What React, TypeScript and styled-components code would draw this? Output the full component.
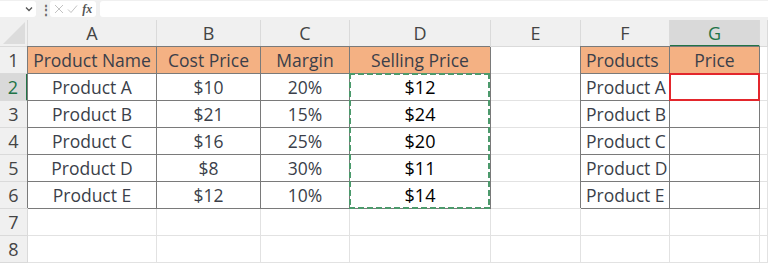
import React from 'react';
import styled, { createGlobalStyle } from 'styled-components';

const GlobalStyle = createGlobalStyle`
  html, body {
    margin: 0;
    padding: 0;
    background: #ffffff;
  }
  body {
    font-family: "Open Sans", "Noto Sans", sans-serif;
  }
`;

const Page = styled.div`
  width: 768px;
  height: 264px;
  overflow: hidden;
  background: #ffffff;
`;

const FormulaBar = styled.div`
  height: 20px;
  background: #f0f0f0;
  display: flex;
  align-items: center;
  gap: 4px;
  padding: 0 0 2px 0;
  box-sizing: border-box;
`;

const NameBox = styled.div`
  width: 36px;
  height: 16px;
  background: #ffffff;
  border-radius: 0 3px 3px 0;
  display: flex;
  align-items: center;
  justify-content: flex-end;
  padding-right: 3px;
  box-sizing: border-box;
`;

const Dots = styled.div`
  width: 6px;
  color: #666;
  font-size: 12px;
  font-weight: 700;
  text-align: center;
`;

const FnBox = styled.div`
  width: 46px;
  height: 16px;
  background: #ffffff;
  border-radius: 3px;
  display: flex;
  align-items: center;
  justify-content: space-around;
  padding: 0 2px;
  box-sizing: border-box;
`;

const Fx = styled.span`
  font-family: "Liberation Serif", serif;
  font-style: italic;
  font-weight: 700;
  color: #555;
  font-size: 12px;
  line-height: 1;
`;

const Input = styled.div`
  flex: 1;
  height: 16px;
  background: #ffffff;
  border-radius: 3px 0 0 3px;
`;

const Sheet = styled.div`
  display: grid;
  grid-template-columns: 28px 129px 104px 89px 141px 90px 89px 90px 1fr;
  grid-auto-rows: 27px;
`;

const Corner = styled.div`
  background: #f0f0f0;
  border-right: 1px solid #dadada;
  border-bottom: 1px solid #dadada;
  position: relative;
  &::after {
    content: '';
    position: absolute;
    right: 2px;
    bottom: 2px;
    width: 22px;
    height: 22px;
    background: #dcdcdc;
    clip-path: polygon(100% 0, 100% 100%, 0 100%);
  }
`;

const ColHead = styled.div<{ $sel?: boolean }>`
  background: ${p => (p.$sel ? '#d9d9d9' : '#f0f0f0')};
  color: ${p => (p.$sel ? '#217346' : '#444444')};
  border-right: 1px solid #dadada;
  border-bottom: ${p => (p.$sel ? '2px solid #217346' : '1px solid #dadada')};
  display: flex;
  align-items: center;
  justify-content: center;
  font-size: 18px;
  box-sizing: border-box;
`;

const RowHead = styled.div<{ $sel?: boolean }>`
  background: ${p => (p.$sel ? '#d9d9d9' : '#f0f0f0')};
  color: ${p => (p.$sel ? '#217346' : '#444444')};
  border-right: ${p => (p.$sel ? '2px solid #217346' : '1px solid #dadada')};
  border-bottom: 1px solid #dadada;
  display: flex;
  align-items: center;
  justify-content: center;
  font-size: 18px;
  box-sizing: border-box;
`;

const Cell = styled.div<{ $head?: boolean; $table?: boolean; $strong?: boolean; $left?: boolean }>`
  position: relative;
  background: ${p => (p.$head ? '#f4b183' : '#ffffff')};
  color: ${p => (p.$strong ? '#000000' : '#3b3f4a')};
  border-right: 1px solid ${p => (p.$table ? '#7a7a7a' : '#e2e2e2')};
  border-bottom: 1px solid ${p => (p.$table ? '#7a7a7a' : '#e2e2e2')};
  box-shadow: ${p => (p.$table ? '-1px -1px 0 #7a7a7a' : 'none')};
  display: flex;
  align-items: center;
  justify-content: ${p => (p.$left ? 'flex-start' : 'center')};
  padding-left: ${p => (p.$left ? '5px' : '0')};
  font-size: ${p => (p.$strong ? '18px' : '17.5px')};
  font-weight: ${p => (p.$strong ? 500 : 400)};
  white-space: nowrap;
  box-sizing: border-box;
`;

/* copy marquee around D2:D6, anchored in D2 */
const CopyMarquee = styled.div<{ $rows: number }>`
  position: absolute;
  z-index: 2;
  left: -1px;
  top: -1px;
  width: calc(100% + 1px);
  height: ${p => p.$rows * 27 + 1}px;
  pointer-events: none;
  background:
    repeating-linear-gradient(90deg, #4c9a6c 0 6px, transparent 6px 9px) top left / 100% 2px no-repeat,
    repeating-linear-gradient(90deg, #4c9a6c 0 6px, transparent 6px 9px) bottom left / 100% 2px no-repeat,
    repeating-linear-gradient(180deg, #4c9a6c 0 6px, transparent 6px 9px) top left / 2px 100% no-repeat,
    repeating-linear-gradient(180deg, #4c9a6c 0 6px, transparent 6px 9px) top right / 2px 100% no-repeat;
`;

const ActiveCell = styled.div`
  position: absolute;
  z-index: 2;
  left: -1px;
  top: -1px;
  right: -1px;
  bottom: -1px;
  border: 2px solid #e3262c;
  pointer-events: none;
`;

const cols = ['A', 'B', 'C', 'D', 'E', 'F', 'G', ''];

const data = [
  ['Product A', '$10', '20%', '$12'],
  ['Product B', '$21', '15%', '$24'],
  ['Product C', '$16', '25%', '$20'],
  ['Product D', '$8', '30%', '$11'],
  ['Product E', '$12', '10%', '$14'],
];

const App = () => {
  const rows = [];
  rows.push(
    <React.Fragment key="r1">
      <RowHead>1</RowHead>
      <Cell $head $table>Product Name</Cell>
      <Cell $head $table>Cost Price</Cell>
      <Cell $head $table>Margin</Cell>
      <Cell $head $table>Selling Price</Cell>
      <Cell />
      <Cell $head $table $left>Products</Cell>
      <Cell $head $table>Price</Cell>
      <Cell />
    </React.Fragment>
  );
  data.forEach((d, i) => {
    rows.push(
      <React.Fragment key={'r' + (i + 2)}>
        <RowHead $sel={i === 0}>{i + 2}</RowHead>
        <Cell $table>{d[0]}</Cell>
        <Cell $table>{d[1]}</Cell>
        <Cell $table>{d[2]}</Cell>
        <Cell $table $strong>
          {d[3]}
          {i === 0 && <CopyMarquee $rows={data.length} />}
        </Cell>
        <Cell />
        <Cell $table $left>{d[0]}</Cell>
        <Cell $table>{i === 0 && <ActiveCell />}</Cell>
        <Cell />
      </React.Fragment>
    );
  });
  [7, 8].forEach(n => {
    rows.push(
      <React.Fragment key={'r' + n}>
        <RowHead>{n}</RowHead>
        {cols.map((_, j) => (
          <Cell key={j} />
        ))}
      </React.Fragment>
    );
  });

  return (
    <Page>
      <GlobalStyle />
      <FormulaBar>
        <NameBox>
          <svg width="8" height="6" viewBox="0 0 8 6">
            <path d="M1 1.5 L4 4.5 L7 1.5" fill="none" stroke="#555" strokeWidth="1.3" />
          </svg>
        </NameBox>
        <Dots>⋮</Dots>
        <FnBox>
          <svg width="10" height="10" viewBox="0 0 10 10">
            <path d="M1 1 L9 9 M9 1 L1 9" stroke="#c2c2c2" strokeWidth="1" />
          </svg>
          <svg width="11" height="10" viewBox="0 0 11 10">
            <path d="M1 5.5 L4 8.5 L10 1.5" fill="none" stroke="#c2c2c2" strokeWidth="1" />
          </svg>
          <Fx>fx</Fx>
        </FnBox>
        <Input />
      </FormulaBar>
      <Sheet>
        <Corner />
        {cols.map((c, i) => (
          <ColHead key={i} $sel={c === 'G'}>{c}</ColHead>
        ))}
        {rows}
      </Sheet>
    </Page>
  );
};

export default App;
